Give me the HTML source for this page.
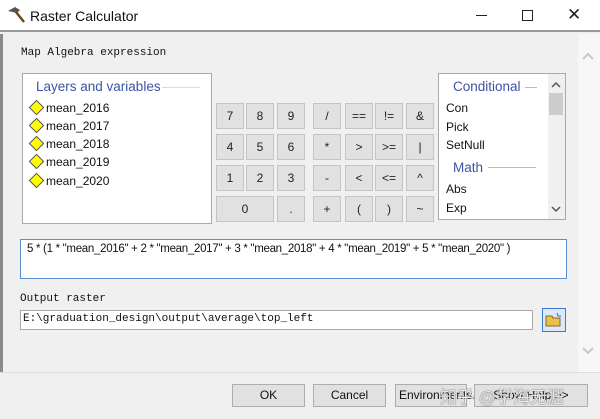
<!DOCTYPE html>
<html><head><style>
*{margin:0;padding:0;box-sizing:border-box}
body{width:600px;height:419px;overflow:hidden;background:#f0f0f0;font-family:"Liberation Sans",sans-serif;position:relative}
.a{position:absolute}
.title{left:0;top:0;width:600px;height:32px;background:#fff;border-bottom:2px solid #9a9a9a}
.mono{font-family:"Liberation Mono",monospace;font-size:11px;color:#111}
.box{background:#fff;border:1px solid #a9a9a9}
.b{position:absolute;width:28px;height:26px;background:#e1e1e1;border:1px solid #c4c4c4;font-size:12px;color:#222;text-align:center;line-height:24px}
.it{font-size:12px;color:#111;position:absolute}
.hd{color:#3b54a6;font-size:13.5px;position:absolute}
.dia{position:absolute;width:11px;height:11px;background:#ff0;border:1px solid #555;transform:rotate(45deg)}
.btn{position:absolute;height:23px;background:#e1e1e1;border:1px solid #adadad;font-size:12px;text-align:center;line-height:21px;color:#111}
</style></head><body>
<div class="a title"></div>
<svg class="a" style="left:7px;top:6px" width="20" height="18" viewBox="0 0 20 18"><path d="M1 5 L8 1 L13 4 L10 7 Z" fill="#555"/><path d="M9 6 L17 16" stroke="#6a4a20" stroke-width="2.5"/></svg>
<div class="a" style="left:30px;top:8px;font-size:14px;color:#111">Raster Calculator</div>
<div class="a" style="left:476px;top:15px;width:11px;height:1px;background:#222"></div>
<div class="a" style="left:522px;top:10px;width:11px;height:11px;border:1px solid #222"></div>
<div class="a" style="left:567px;top:8px;font-size:17px;color:#222;line-height:14px">✕</div>
<div class="a" style="left:0;top:34px;width:3px;height:338px;background:#8a8a8a"></div>
<div class="a" style="left:578px;top:34px;width:22px;height:338px;background:#f7f7f7"></div>
<svg class="a" style="left:581px;top:51px" width="14" height="10"><path d="M2 8 L7 3 L12 8" stroke="#c8c8c8" stroke-width="2" fill="none"/></svg>
<svg class="a" style="left:581px;top:346px" width="14" height="10"><path d="M2 2 L7 7 L12 2" stroke="#c8c8c8" stroke-width="2" fill="none"/></svg>
<div class="a mono" style="left:21px;top:47px">Map Algebra expression</div>
<div class="a box" style="left:22px;top:73px;width:190px;height:151px"></div>
<div class="hd" style="left:36px;top:79px">Layers and variables</div>
<div class="a" style="left:162px;top:87px;width:38px;height:1px;background:#ddd"></div>
<div class="dia" style="left:31px;top:102px"></div><div class="it" style="left:46px;top:101px">mean_2016</div>
<div class="dia" style="left:31px;top:120px"></div><div class="it" style="left:46px;top:119px">mean_2017</div>
<div class="dia" style="left:31px;top:138px"></div><div class="it" style="left:46px;top:137px">mean_2018</div>
<div class="dia" style="left:31px;top:156px"></div><div class="it" style="left:46px;top:155px">mean_2019</div>
<div class="dia" style="left:31px;top:175px"></div><div class="it" style="left:46px;top:174px">mean_2020</div>
<div class="b" style="left:216px;top:103px">7</div><div class="b" style="left:246px;top:103px">8</div><div class="b" style="left:277px;top:103px">9</div>
<div class="b" style="left:313px;top:103px">/</div><div class="b" style="left:345px;top:103px">==</div><div class="b" style="left:375px;top:103px">!=</div><div class="b" style="left:406px;top:103px">&amp;</div>
<div class="b" style="left:216px;top:134px">4</div><div class="b" style="left:246px;top:134px">5</div><div class="b" style="left:277px;top:134px">6</div>
<div class="b" style="left:313px;top:134px">*</div><div class="b" style="left:345px;top:134px">&gt;</div><div class="b" style="left:375px;top:134px">&gt;=</div><div class="b" style="left:406px;top:134px">|</div>
<div class="b" style="left:216px;top:165px">1</div><div class="b" style="left:246px;top:165px">2</div><div class="b" style="left:277px;top:165px">3</div>
<div class="b" style="left:313px;top:165px">-</div><div class="b" style="left:345px;top:165px">&lt;</div><div class="b" style="left:375px;top:165px">&lt;=</div><div class="b" style="left:406px;top:165px">^</div>
<div class="b" style="left:216px;top:196px;width:58px">0</div><div class="b" style="left:277px;top:196px">.</div>
<div class="b" style="left:313px;top:196px">+</div><div class="b" style="left:345px;top:196px">(</div><div class="b" style="left:375px;top:196px">)</div><div class="b" style="left:406px;top:196px">~</div>
<div class="a box" style="left:438px;top:73px;width:128px;height:147px"></div>
<div class="hd" style="left:453px;top:79px">Conditional</div>
<div class="a" style="left:525px;top:87px;width:12px;height:1px;background:#bbb"></div>
<div class="a" style="left:548px;top:74px;width:17px;height:145px;background:#f0f0f0"></div>
<div class="a" style="left:549px;top:93px;width:14px;height:22px;background:#cdcdcd"></div>
<svg class="a" style="left:551px;top:81px" width="10" height="8"><path d="M1 6 L5 2 L9 6" stroke="#555" stroke-width="1.5" fill="none"/></svg>
<svg class="a" style="left:551px;top:205px" width="10" height="8"><path d="M1 2 L5 6 L9 2" stroke="#555" stroke-width="1.5" fill="none"/></svg>
<div class="it" style="left:446px;top:101px">Con</div>
<div class="it" style="left:446px;top:120px">Pick</div>
<div class="it" style="left:446px;top:138px">SetNull</div>
<div class="hd" style="left:453px;top:160px">Math</div>
<div class="a" style="left:488px;top:167px;width:48px;height:1px;background:#bbb"></div>
<div class="it" style="left:446px;top:182px">Abs</div>
<div class="it" style="left:446px;top:201px">Exp</div>
<div class="a box" style="left:20px;top:239px;width:547px;height:40px;border-color:#5a8fd0"></div>
<div class="a" style="left:27px;top:243px;font-size:11.5px;color:#111;letter-spacing:-0.3px">5 * (1 * "mean_2016" + 2 * "mean_2017" + 3 * "mean_2018" + 4 * "mean_2019" + 5 * "mean_2020" )</div>
<div class="a mono" style="left:20px;top:293px">Output raster</div>
<div class="a box" style="left:20px;top:310px;width:513px;height:20px"></div>
<div class="a mono" style="left:23px;top:313px">E:\graduation_design\output\average\top_left</div>
<div class="a" style="left:542px;top:308px;width:24px;height:24px;border:1px solid #3b7bd0;background:#dbe8f7"></div>
<svg class="a" style="left:545px;top:312px" width="18" height="16"><path d="M1 4 H7 L8 6 H15 V14 H1 Z" fill="#e9c04a" stroke="#8a6a20"/><path d="M12 1 L13 4 L16 4" stroke="#2a6bd0" fill="none"/></svg>
<div class="a" style="left:0;top:372px;width:600px;height:47px;background:#f0f0f0;border-top:1px solid #dcdcdc"></div>
<div class="btn" style="left:232px;top:384px;width:73px">OK</div>
<div class="btn" style="left:313px;top:384px;width:73px">Cancel</div>
<div class="btn" style="left:395px;top:384px;width:72px;text-align:left;padding-left:3px">Environments...</div>
<div class="btn" style="left:474px;top:384px;width:114px">Show Help &gt;&gt;</div>
<div class="a" style="left:440px;top:383px;font-size:17px;color:rgba(255,255,255,0.85);text-shadow:0 0 1px #666,0 0 1px #666;font-family:'Liberation Sans','Noto Sans CJK SC',sans-serif">知乎 @学海无涯</div>
</body></html>
